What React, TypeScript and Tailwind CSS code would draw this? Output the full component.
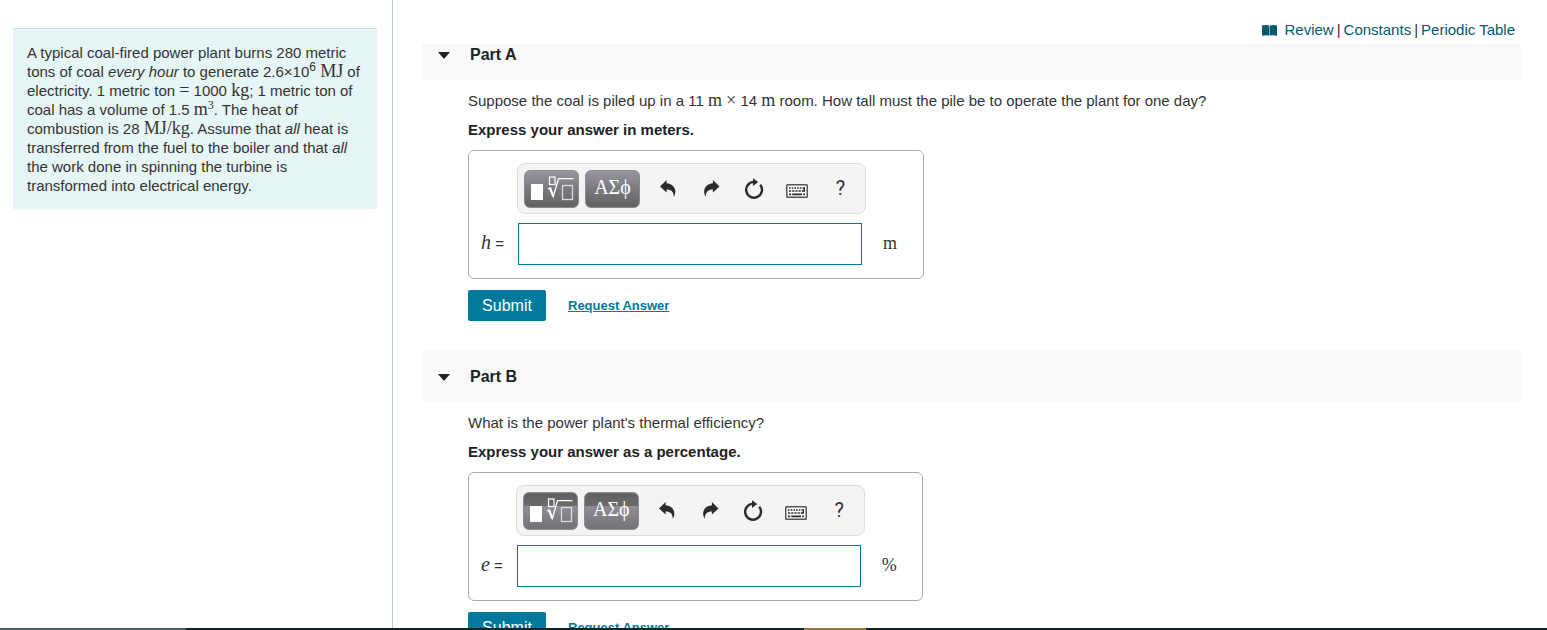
import { ReactNode } from 'react'

interface PartProps {
  id: string
  title: string
  question: ReactNode
  instruction: string
  symbol: string
  unit: string
  toolClass: string
  className?: string
}

function UndoIcon() {
  return (
    <svg width="17" height="17" viewBox="0 0 17 17" fill="#2b2b2b" aria-hidden="true">
      <path d="M0 6.4 L6.6 0 V3.2 C13 3.4 18 9.5 13.8 17 C13.8 11.8 11.5 9.4 6.6 9.4 V12.6 Z" />
    </svg>
  )
}

function RedoIcon() {
  return (
    <svg width="17" height="17" viewBox="0 0 17 17" fill="#2b2b2b" aria-hidden="true">
      <path d="M16.5 6.4 L9.9 0 V3.2 C3.5 3.4 -1.5 9.5 2.7 17 C2.7 11.8 5 9.4 9.9 9.4 V12.6 Z" />
    </svg>
  )
}

function ResetIcon() {
  return (
    <svg width="20" height="21" viewBox="0 0 20 21" aria-hidden="true">
      <path d="M10.5 3.9 A7.9 7.9 0 1 0 16.2 6.8" fill="none" stroke="#2b2b2b" strokeWidth="2.4" />
      <path d="M9 0.3 L14.2 4 L9 8 Z" fill="#2b2b2b" />
    </svg>
  )
}

function KeyboardIcon() {
  return (
    <svg width="22" height="14" viewBox="0 0 22 14" aria-hidden="true">
      <rect x="0.75" y="0.75" width="20.5" height="12.5" rx="0.8" fill="#fff" stroke="#555" strokeWidth="1.5" />
      <path d="M3 4 H19" stroke="#2b2b2b" strokeWidth="1.6" strokeDasharray="1.6 1.1" />
      <path d="M3 7 H19" stroke="#2b2b2b" strokeWidth="1.6" strokeDasharray="2.2 1" />
      <path d="M18.3 3.2 V7.8" stroke="#2b2b2b" strokeWidth="1.4" />
      <path d="M3 10.3 H5 M6.2 10.3 H16 M17.2 10.3 H19" stroke="#2b2b2b" strokeWidth="1.7" />
    </svg>
  )
}

function TemplateIcon() {
  return (
    <svg width="45" height="25" viewBox="-2 0 45 25" fill="none" stroke="#fff" aria-hidden="true">
      <rect x="0" y="8" width="12" height="16" fill="#fff" stroke="none" />
      <rect x="18.5" y="1" width="5.5" height="7.5" strokeWidth="1.2" />
      <path d="M17 13 L19 12 L22.3 20.5 L27.5 2.7 H42.5" strokeWidth="1.3" />
      <path d="M19 12 L22.3 20.5" strokeWidth="2.2" />
      <rect x="31.5" y="9.5" width="10" height="14" stroke="#ddd" strokeWidth="1.3" />
    </svg>
  )
}

function BookIcon() {
  return (
    <svg width="15" height="11" viewBox="0 0 15 11" fill="#005a70" aria-hidden="true">
      <path d="M0 0.4 Q4 -0.3 7 0.5 V10.6 Q4 9.9 0 10.8 Z" />
      <path d="M8 0.5 Q11 -0.3 15 0.4 V10.8 Q11 9.9 8 10.6 Z" />
      <path d="M7.5 1 V10.4" stroke="#7fadb8" strokeWidth="1" />
    </svg>
  )
}

function MathText({ children }: { children: ReactNode }) {
  return <span className="font-['Liberation_Serif'] text-lg leading-0">{children}</span>
}

function Toolbar({ toolClass }: { toolClass: string }) {
  const tool = `flex h-[38px] w-[55px] items-center justify-center rounded-md border border-[#8c8c8c] text-white ${toolClass}`
  const icon = 'flex h-9 w-[43px] items-center justify-center'

  return (
    <div className="flex h-[51px] items-center rounded-lg border border-[#dcdcdc] bg-[#f4f4f4] pr-[3px] pl-1.5">
      <button type="button" aria-label="Templates" className={tool}><TemplateIcon /></button>
      <button type="button" aria-label="Symbols" className={`${tool} mr-[7px] ml-1.5 pb-1 font-['Liberation_Serif'] text-xl`}>ΑΣϕ</button>
      <button type="button" aria-label="Undo" className={icon}><UndoIcon /></button>
      <button type="button" aria-label="Redo" className={icon}><RedoIcon /></button>
      <button type="button" aria-label="Reset" className={icon}><ResetIcon /></button>
      <button type="button" aria-label="Keyboard shortcuts" className={`${icon} pt-1`}><KeyboardIcon /></button>
      <button type="button" aria-label="Help" className={`${icon} pb-0.5 font-[Roboto] text-xl`}>?</button>
    </div>
  )
}

function Part({ id, title, question, instruction, symbol, unit, toolClass, className = '' }: PartProps) {
  return (
    <section className={className}>
      <h2 className="flex h-[52px] items-center bg-[#f9f9f9] pt-0.5 pl-4 text-base font-bold text-[#222]">
        <svg width="12" height="7" viewBox="0 0 12 7" className="mr-5" aria-hidden="true">
          <path d="M0 0 H12 L6 7 Z" fill="#222" />
        </svg>
        {title}
      </h2>
      <div className="pt-3 pb-[29px] pl-[46px]">
        <p>{question}</p>
        <p className="mt-[11px] font-bold text-[#222]">{instruction}</p>
        <div className="mt-[11px] grid w-fit grid-cols-[auto_auto_auto] items-center gap-x-[13px] gap-y-[9px] rounded-md border border-[#a9a9a9] pt-3 pb-[13px] pl-3">
          <div className="col-start-2">
            <Toolbar toolClass={toolClass} />
          </div>
          <label htmlFor={id} className="col-start-1">
            <span className="font-['Liberation_Serif'] text-xl leading-0 italic">{symbol}</span> =
          </label>
          <input id={id} type="text" className="ml-px h-[42px] w-[344px] border border-[#007a9c] bg-white px-2 outline-none" />
          <span className="w-11 pl-1"><MathText>{unit}</MathText></span>
        </div>
        <div className="mt-[11px] flex items-center">
          <button type="button" className="h-[31px] w-[78px] rounded-xs bg-[#007a9c] text-base text-white">Submit</button>
          <a href="#" className="ml-[22px] text-[13px] font-bold text-[#007a9c] underline">Request Answer</a>
        </div>
      </div>
    </section>
  )
}

export default function App() {
  return (
    <div className="flex h-screen flex-col overflow-hidden bg-white font-['Liberation_Sans',sans-serif] text-[15px] leading-[18px] text-[#333]">
      <div className="flex min-h-0 flex-1">
        <aside className="w-[393px] shrink-0 border-r border-[#b9cbdb] pt-7 pr-[15px] pl-[13px]">
          <p className="border-t border-[#d5dddd] bg-[#e6f6f6] p-3.5 leading-[19px]">
            A typical coal-fired power plant burns 280 metric tons of coal <i>every hour</i> to generate
            2.6×10<sup className="text-[12px]">6</sup> <MathText>MJ</MathText> of electricity. 1 metric
            ton <MathText>=</MathText> 1000 <MathText>kg</MathText>; 1 metric ton of coal has a volume of
            1.5 <MathText>m<sup className="text-[12px]">3</sup></MathText>. The heat of combustion is
            28 <MathText>MJ/kg</MathText>. Assume that <i>all</i> heat is transferred from the fuel to the
            boiler and that <i>all</i> the work done in spinning the turbine is transformed into
            electrical energy.
          </p>
        </aside>

        <main className="flex min-w-0 flex-1 flex-col pr-[26px] pl-[29px]">
          <nav className="flex h-11 shrink-0 items-center justify-end gap-[3px] pt-4 pr-1.5">
            <a href="#" className="flex items-center gap-2 text-[#005a70]"><BookIcon />Review</a>
            <span>|</span>
            <a href="#" className="text-[#005a70]">Constants</a>
            <span>|</span>
            <a href="#" className="text-[#005a70]">Periodic Table</a>
          </nav>
          <div className="min-h-0 flex-1 overflow-hidden">
            <Part
              id="pile-height"
              title="Part A"
              question={
                <>
                  Suppose the coal is piled up in a 11 <MathText>m</MathText> <MathText>×</MathText> 14{' '}
                  <MathText>m</MathText> room. How tall must the pile be to operate the plant for one day?
                </>
              }
              instruction="Express your answer in meters."
              symbol="h"
              unit="m"
              toolClass="bg-linear-to-b from-[#9894a0] to-[#616161]"
              className="-mt-4"
            />
            <Part
              id="efficiency"
              title="Part B"
              question="What is the power plant's thermal efficiency?"
              instruction="Express your answer as a percentage."
              symbol="e"
              unit="%"
              toolClass="bg-[linear-gradient(#616161,#6b6b6b_37%,#908d99_37%,#737274)]"
            />
          </div>
        </main>
      </div>

      <footer className="flex h-0.5 shrink-0 bg-[#0c2628]">
        <div className="w-[12%] bg-[#456064]" />
        <div className="w-[40%]" />
        <div className="w-[4%] bg-[#94793a]" />
      </footer>
    </div>
  )
}
